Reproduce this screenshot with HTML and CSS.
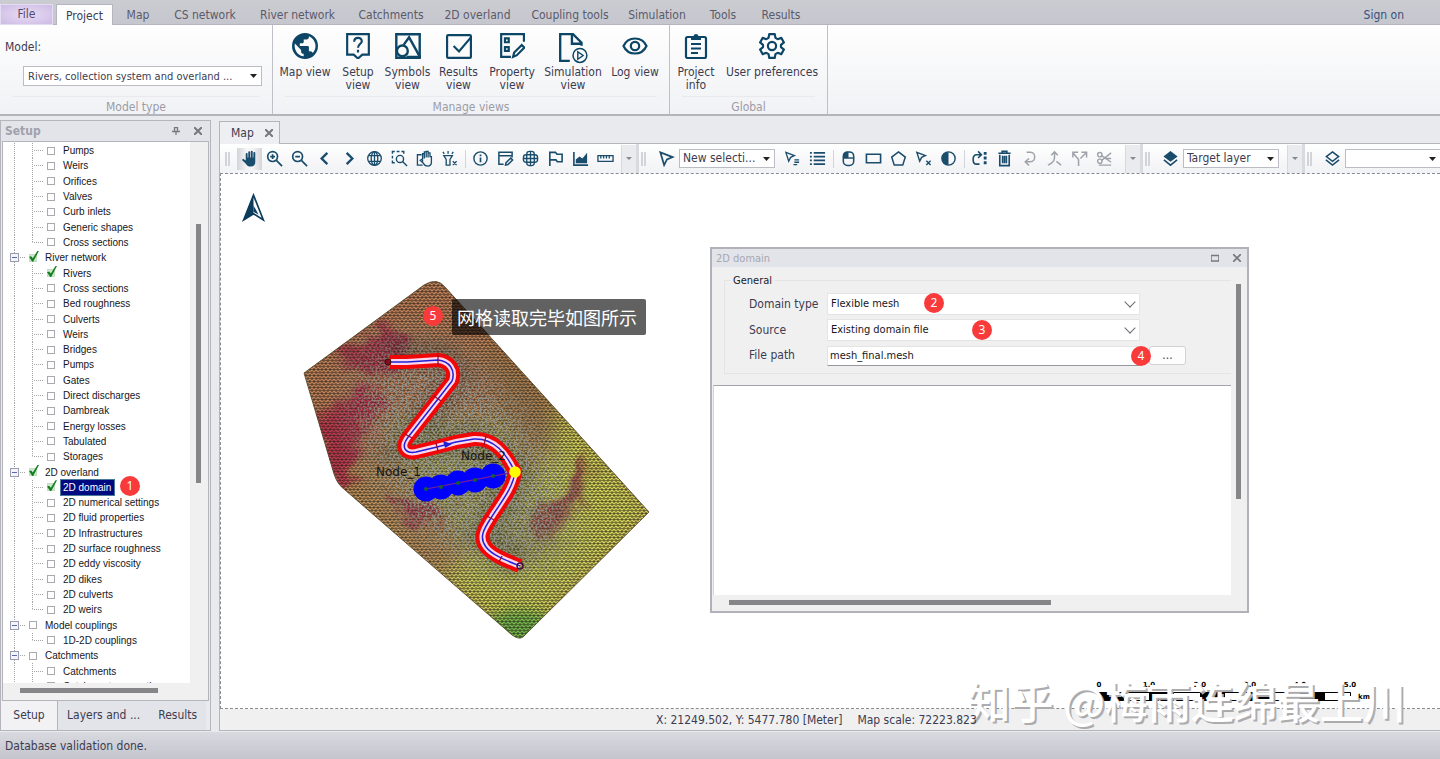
FILE: index.html
```html
<!DOCTYPE html>
<html lang="en">
<head>
<meta charset="utf-8">
<title>2D domain - Map</title>
<link rel="stylesheet" href="styles.css">
</head>
<body>
<svg class="defs" aria-hidden="true">
  <symbol id="i-globe" viewBox="0 0 24 24"><path fill="currentColor" fill-rule="evenodd" d="M12 0a12 12 0 1 0 0 24a12 12 0 1 0 0-24zM15.600 2.900v.6a2.400 2.400 0 0 1-2.400 2.400h-2.400v2.400a1.200 1.200 0 0 1-1.200 1.200H7.200V12h7.200a1.200 1.200 0 0 1 1.200 1.200v3.600h1.200c1.100 0 2 .7 2.300 1.700A9.600 9.600 0 0 0 15.600 3zM2.700 9.800a9.600 9.600 0 0 0 8.100 11.700v-2.300a2.400 2.400 0 0 1-2.400-2.400v-1.200z"/></symbol>
  <symbol id="i-setup" viewBox="0 0 24 24"><g fill="none" stroke="currentColor" stroke-width="2"><path d="M2 1h20v19h-6l-4 3.500L8 20H2z"/><path d="M8.500 8c0-4.500 7-4.500 7-.5 0 2.500-3.500 3-3.500 6M12 15.500V18"/></g></symbol>
  <symbol id="i-symbols" viewBox="0 0 24 24"><g fill="none" stroke="currentColor" stroke-width="2.200"><path d="M1.200 1.200h21.600v21.600H1.200z"/><circle cx="6.800" cy="16.500" r="5"/><path d="M8 11l5-7 10 18H11"/></g></symbol>
  <symbol id="i-results" viewBox="0 0 24 24"><g fill="none" stroke="currentColor" stroke-width="2"><rect x="1" y="2" width="22" height="21" rx="1"/><path d="M7 12l5 5L23 4"/></g></symbol>
  <symbol id="i-property" viewBox="0 0 24 24"><g fill="none" stroke="currentColor" stroke-width="2"><path d="M11 22H2V1h21v7M5.500 5h3.500v3.500H5.500zM5.500 13h3.500v3.500H5.500zM13 22l1-4 7-7 2.500 2.500-7 7z"/></g></symbol>
  <symbol id="i-simulation" viewBox="0 0 28 30"><g fill="none" stroke="currentColor" stroke-width="2.200"><path d="M11 27H2V2h12l8 8v3M13 2v9h9"/><circle cx="20.500" cy="22" r="6.500" stroke-width="1.400"/><path d="M18.500 18.500v7l5-3.500z" stroke-width="1.300"/></g></symbol>
  <symbol id="i-eye" viewBox="0 0 26 18"><g fill="none" stroke="currentColor" stroke-width="2.200"><path d="M1.500 9C6-1 20-1 24.500 9C20 19 6 19 1.500 9z"/><circle cx="13" cy="9" r="4.200"/></g></symbol>
  <symbol id="i-clip" viewBox="0 0 24 26"><g fill="none" stroke="currentColor" stroke-width="2.200"><rect x="2" y="4" width="20" height="21" rx="1.500"/><path d="M7 11h10M7 15.500h10M7 20h7"/></g><path fill="currentColor" d="M7 3h2.500a2.600 2.600 0 0 1 5 0H17v4H7z"/></symbol>
  <symbol id="i-gear" viewBox="0 0 24 24"><g fill="none" stroke="currentColor" stroke-width="2"><path stroke-linejoin="round" d="M9.500 1h5l.7 3.500 2 1.200 3.400-1.200 2.400 4.200-2.700 2.300v2l2.700 2.300-2.400 4.200-3.400-1.200-2 1.200-.7 3.500h-5l-.7-3.500-2-1.200-3.400 1.200L1 15.300 3.700 13v-2L1 8.700l2.400-4.200 3.400 1.200 2-1.200z"/><circle cx="12" cy="12" r="3.800"/></g></symbol>
  <symbol id="t-hand" viewBox="0 0 18 18"><path fill="currentColor" d="M1 10.500l1.200-1.200L5 11V4.200a1 1 0 0 1 2 0V8h.7V2.200a1 1 0 0 1 2 0V8h.7V1.700a1 1 0 0 1 2 0V8h.7V3a1 1 0 0 1 2 0V13c0 3-2 4.500-4.500 4.500-3 0-4.300-1-5.500-3z"/></symbol>
  <symbol id="t-zin" viewBox="0 0 18 18"><g fill="none" stroke="currentColor" stroke-width="1.800"><circle cx="7" cy="7" r="5.200"/><path d="M11 11l6 6M4.500 7h5M7 4.500v5"/></g></symbol>
  <symbol id="t-zout" viewBox="0 0 18 18"><g fill="none" stroke="currentColor" stroke-width="1.800"><circle cx="7" cy="7" r="5.200"/><path d="M11 11l6 6M4.500 7h5"/></g></symbol>
  <symbol id="t-prev" viewBox="0 0 18 18"><path fill="none" stroke="currentColor" stroke-width="2.500" d="M12 3L6 9l6 6"/></symbol>
  <symbol id="t-next" viewBox="0 0 18 18"><path fill="none" stroke="currentColor" stroke-width="2.500" d="M6 3l6 6-6 6"/></symbol>
  <symbol id="t-world" viewBox="0 0 18 18"><g fill="none" stroke="currentColor" stroke-width="1.400"><circle cx="9" cy="9" r="7.200"/><ellipse cx="9" cy="9" rx="3.500" ry="7.200"/><path d="M9 2v14M3 6h12M3 12h12"/></g></symbol>
  <symbol id="t-zsel" viewBox="0 0 18 18"><g fill="none" stroke="currentColor" stroke-width="1.500"><path d="M1.500 4V1.500H4M6 1.500h3M11 1.500h2.500V4M1.500 6v3M1.500 11v2.500H4"/><circle cx="9.500" cy="9.500" r="3.800"/><path d="M12 12l5 5"/></g></symbol>
  <symbol id="t-pansel" viewBox="0 0 18 18"><path fill="none" stroke="currentColor" stroke-width="1.400" d="M6 5H1.500v11H7M7 10V4h1.800v5V2h2v6V1.500h2V8V3h2v4h1.500v6c0 3-2 4-4 4s-3.500-1-4.500-3L4.500 11l1.500-1 1.500 2"/></symbol>
  <symbol id="t-flash" viewBox="0 0 18 18"><path fill="none" stroke="currentColor" stroke-width="1.400" d="M3 6h9l-2.500 4v6h-4v-6zM7.500 1v3M2 2l1.500 2M13 2l-1.500 2M12.500 12l4 4M16.500 12l-4 4"/></symbol>
  <symbol id="t-info" viewBox="0 0 18 18"><g fill="none" stroke="currentColor" stroke-width="1.500"><circle cx="9" cy="9" r="7"/><path d="M9 8v5M9 4.800v1.800" stroke-width="1.800"/></g></symbol>
  <symbol id="t-edit" viewBox="0 0 18 18"><path fill="none" stroke="currentColor" stroke-width="1.600" d="M7 15H2V2.500h14V8M2 6h14M9 16l.6-2.600L14.500 8.500l2 2L11.600 15.400z"/></symbol>
  <symbol id="t-center" viewBox="0 0 18 18"><g fill="none" stroke="currentColor" stroke-width="1.400"><rect x="5" y="1.500" width="8" height="15" rx="3"/><rect x="1.500" y="5" width="15" height="8" rx="3"/><path d="M9 1v16M1 9h16"/></g></symbol>
  <symbol id="t-flag" viewBox="0 0 18 18"><path fill="none" stroke="currentColor" stroke-width="1.700" d="M3 17V2.500h6l1.500 2H16v8h-5l-1.500-2H3"/></symbol>
  <symbol id="t-chart" viewBox="0 0 18 18"><path fill="none" stroke="currentColor" stroke-width="1.700" d="M2 2v14h15"/><path fill="currentColor" d="M4 14V10l4-3 3 2 5-6v11z"/></symbol>
  <symbol id="t-ruler" viewBox="0 0 18 18"><path fill="none" stroke="currentColor" stroke-width="1.400" d="M1 6h16v6H1zM4 6v3M7 6v3M10 6v3M13 6v3"/></symbol>
  <symbol id="t-arrow" viewBox="0 0 18 18"><path fill="none" stroke="currentColor" stroke-width="1.800" d="M2.500 2.500l13 5-6 2.500-3 6z"/></symbol>
  <symbol id="t-arrlist" viewBox="0 0 18 18"><path fill="none" stroke="currentColor" stroke-width="1.400" d="M2 2.500l9 3.500-4 1.800-2 4zM11 10.500h5M11 13h5M10 15.500h4"/></symbol>
  <symbol id="t-list" viewBox="0 0 18 18"><path fill="none" stroke="currentColor" stroke-width="1.900" d="M1 3h2M5 3h12M1 7h2M5 7h12M1 11h2M5 11h12M1 15h2M5 15h12"/></symbol>
  <symbol id="t-mouse" viewBox="0 0 18 18"><rect x="3.500" y="2" width="11" height="14.500" rx="4.500" fill="none" stroke="currentColor" stroke-width="1.600"/><path fill="currentColor" d="M4 8.500V6a4 4 0 0 1 5-4v6.500z"/><path stroke="currentColor" stroke-width="1.500" d="M3.500 8.500h11"/></symbol>
  <symbol id="t-rect" viewBox="0 0 18 18"><path fill="none" stroke="currentColor" stroke-width="1.700" d="M1.500 4.500h15v9h-15z"/></symbol>
  <symbol id="t-poly" viewBox="0 0 18 18"><path fill="none" stroke="currentColor" stroke-width="1.600" d="M9 2l7.200 5.500L13.500 16h-9L1.800 7.500z"/></symbol>
  <symbol id="t-arrx" viewBox="0 0 18 18"><path fill="none" stroke="currentColor" stroke-width="1.500" d="M2 2.500l9 3.500-4 1.800-2 4zM12 11.500l4.500 4.500M16.500 11.500L12 16"/></symbol>
  <symbol id="t-half" viewBox="0 0 18 18"><circle cx="9" cy="9" r="7" fill="none" stroke="currentColor" stroke-width="1.500"/><path fill="currentColor" d="M9 2a7 7 0 0 0 0 14z"/></symbol>
  <symbol id="t-move" viewBox="0 0 18 18"><g fill="none" stroke="currentColor" stroke-width="1.700"><path d="M9 15H6C1 15 1 5 6 5H10M7.500 1.500L11 5 7.500 8.500"/><path d="M15 2v15" stroke-width="3" stroke-dasharray="3 2"/></g></symbol>
  <symbol id="t-trash" viewBox="0 0 18 18"><g fill="none" stroke="currentColor" stroke-width="1.700"><path d="M2.500 3.500h13M6.500 3V1.500h5V3M4 5v11.500h10V5M7 6v8M9 6v8M11 6v8"/></g></symbol>
  <symbol id="t-undo" viewBox="0 0 18 18"><path fill="none" stroke="currentColor" stroke-width="1.600" d="M6 2.500h4c6 0 6 10 0 10H5M8.500 9l-4 3.500 4 4"/></symbol>
  <symbol id="t-merge" viewBox="0 0 18 18"><path fill="none" stroke="currentColor" stroke-width="1.600" d="M2 16c5-2 7-4 7-8V2M5.500 5.500L9 2l3.500 3.500M16 16l-5-4"/></symbol>
  <symbol id="t-split" viewBox="0 0 18 18"><path fill="none" stroke="currentColor" stroke-width="1.600" d="M8 17v-7L2 3M2 8V2.500h5.500M10 9l6-6M11 2.500h5.500V8"/></symbol>
  <symbol id="t-cut" viewBox="0 0 18 18"><g fill="none" stroke="currentColor" stroke-width="1.500"><circle cx="4" cy="5" r="2.300"/><circle cx="4" cy="12" r="2.300"/><path d="M6 6l10 7M6 11l10-8M3 16h13M11 9h5"/></g></symbol>
  <symbol id="t-layf" viewBox="0 0 18 18"><path fill="currentColor" d="M9 1l7.500 6L9 12.500 1.500 7z"/><path fill="none" stroke="currentColor" stroke-width="1.700" d="M2 10.500l7 5.500 7-5.500"/></symbol>
  <symbol id="t-lay" viewBox="0 0 18 18"><path fill="none" stroke="currentColor" stroke-width="1.600" d="M9 2l6.500 5L9 12 2.500 7zM2 10.500l7 5.500 7-5.500"/></symbol>
</svg>

<nav class="tabs">
  <button class="tab file">File</button>
  <button class="tab active">Project</button>
  <button class="tab">Map</button>
  <button class="tab">CS network</button>
  <button class="tab">River network</button>
  <button class="tab">Catchments</button>
  <button class="tab">2D overland</button>
  <button class="tab">Coupling tools</button>
  <button class="tab">Simulation</button>
  <button class="tab">Tools</button>
  <button class="tab">Results</button>
  <a class="signon" href="#">Sign on</a>
</nav>

<header class="ribbon">
  <section class="group model">
    <div class="model-body">
      <label for="model">Model:</label>
      <span class="combo"><select id="model"><option>Rivers, collection system and overland ...</option></select></span>
    </div>
    <h2 class="group-name">Model type</h2>
  </section>
  <section class="group views">
    <div class="tools">
      <button class="big"><svg><use href="#i-globe"/></svg>Map view</button>
      <button class="big"><svg><use href="#i-setup"/></svg>Setup<br>view</button>
      <button class="big"><svg><use href="#i-symbols"/></svg>Symbols<br>view</button>
      <button class="big"><svg><use href="#i-results"/></svg>Results<br>view</button>
      <button class="big"><svg><use href="#i-property"/></svg>Property<br>view</button>
      <button class="big"><svg class="tall"><use href="#i-simulation"/></svg>Simulation<br>view</button>
      <button class="big"><svg><use href="#i-eye"/></svg>Log view</button>
    </div>
    <h2 class="group-name">Manage views</h2>
  </section>
  <section class="group global">
    <div class="tools">
      <button class="big"><svg><use href="#i-clip"/></svg>Project<br>info</button>
      <button class="big"><svg><use href="#i-gear"/></svg>User preferences</button>
    </div>
    <h2 class="group-name">Global</h2>
  </section>
</header>

<main class="work">
  <aside class="panel">
    <div class="panel-head">
      <h2>Setup</h2>
      <button class="mini" aria-label="Pin"><svg viewBox="0 0 8 8"><path d="M2.500 0v4M5.500 0v4M2 .5h4M0 4.500h8M4 4v4" fill="none" stroke="currentColor" stroke-width="1.300"/></svg></button>
      <button class="mini" aria-label="Close"><svg viewBox="0 0 8 8"><path d="M0 0l8 8M8 0L0 8" stroke="currentColor" stroke-width="2"/></svg></button>
    </div>
    <div class="tree-box">
      <div class="tree-view">
        <ul class="tree">
          <li><label><input type="checkbox">Pumps</label></li>
          <li><label><input type="checkbox">Weirs</label></li>
          <li><label><input type="checkbox">Orifices</label></li>
          <li><label><input type="checkbox">Valves</label></li>
          <li><label><input type="checkbox">Curb inlets</label></li>
          <li><label><input type="checkbox">Generic shapes</label></li>
          <li class="last"><label><input type="checkbox">Cross sections</label></li>
          <li class="root"><button class="fold" aria-label="Collapse"></button><label><input type="checkbox" checked>River network</label></li>
          <li><label><input type="checkbox" checked>Rivers</label></li>
          <li><label><input type="checkbox">Cross sections</label></li>
          <li><label><input type="checkbox">Bed roughness</label></li>
          <li><label><input type="checkbox">Culverts</label></li>
          <li><label><input type="checkbox">Weirs</label></li>
          <li><label><input type="checkbox">Bridges</label></li>
          <li><label><input type="checkbox">Pumps</label></li>
          <li><label><input type="checkbox">Gates</label></li>
          <li><label><input type="checkbox">Direct discharges</label></li>
          <li><label><input type="checkbox">Dambreak</label></li>
          <li><label><input type="checkbox">Energy losses</label></li>
          <li><label><input type="checkbox">Tabulated</label></li>
          <li class="last"><label><input type="checkbox">Storages</label></li>
          <li class="root"><button class="fold" aria-label="Collapse"></button><label><input type="checkbox" checked>2D overland</label></li>
          <li><label><input type="checkbox" checked><span class="picked">2D domain</span></label><b class="badge b1">1</b></li>
          <li><label><input type="checkbox">2D numerical settings</label></li>
          <li><label><input type="checkbox">2D fluid properties</label></li>
          <li><label><input type="checkbox">2D Infrastructures</label></li>
          <li><label><input type="checkbox">2D surface roughness</label></li>
          <li><label><input type="checkbox">2D eddy viscosity</label></li>
          <li><label><input type="checkbox">2D dikes</label></li>
          <li><label><input type="checkbox">2D culverts</label></li>
          <li class="last"><label><input type="checkbox">2D weirs</label></li>
          <li class="root"><button class="fold" aria-label="Collapse"></button><label><input type="checkbox">Model couplings</label></li>
          <li class="last"><label><input type="checkbox">1D-2D couplings</label></li>
          <li class="root"><button class="fold" aria-label="Collapse"></button><label><input type="checkbox">Catchments</label></li>
          <li><label><input type="checkbox">Catchments</label></li>
          <li><label><input type="checkbox">Catchment connections</label></li>
        </ul>
      </div>
      <div class="vbar"><i></i></div>
      <div class="hbar"><i></i></div>
    </div>
    <div class="panel-tabs">
      <button class="on">Setup</button><button>Layers and ...</button><button>Results</button>
    </div>
  </aside>

  <section class="doc">
    <div class="doc-tabs"><div class="doc-tab">Map <button class="mini" aria-label="Close map"><svg viewBox="0 0 8 8"><path d="M0 0l8 8M8 0L0 8" stroke="currentColor" stroke-width="2"/></svg></button></div></div>
    <div class="bars">
      <div class="bar">
        <i class="grip"></i>
        <button class="t on" aria-label="Pan"><svg><use href="#t-hand"/></svg></button>
        <button class="t" aria-label="Zoom in"><svg><use href="#t-zin"/></svg></button>
        <button class="t" aria-label="Zoom out"><svg><use href="#t-zout"/></svg></button>
        <button class="t" aria-label="Previous"><svg><use href="#t-prev"/></svg></button>
        <button class="t" aria-label="Next"><svg><use href="#t-next"/></svg></button>
        <button class="t" aria-label="Full extent"><svg><use href="#t-world"/></svg></button>
        <button class="t" aria-label="Zoom to selection"><svg><use href="#t-zsel"/></svg></button>
        <button class="t" aria-label="Pan to selection"><svg><use href="#t-pansel"/></svg></button>
        <button class="t" aria-label="Clear flash"><svg><use href="#t-flash"/></svg></button>
        <i class="sep"></i>
        <button class="t" aria-label="Identify"><svg><use href="#t-info"/></svg></button>
        <button class="t" aria-label="Edit"><svg><use href="#t-edit"/></svg></button>
        <button class="t" aria-label="Center"><svg><use href="#t-center"/></svg></button>
        <button class="t" aria-label="Flag"><svg><use href="#t-flag"/></svg></button>
        <button class="t" aria-label="Profile"><svg><use href="#t-chart"/></svg></button>
        <button class="t" aria-label="Measure"><svg><use href="#t-ruler"/></svg></button>
        <button class="more" aria-label="More"></button>
      </div>
      <div class="bar">
        <i class="grip"></i>
        <button class="t" aria-label="Select"><svg><use href="#t-arrow"/></svg></button>
        <span class="combo small"><select aria-label="Selection mode"><option>New selecti...</option></select></span>
        <i class="gap"></i>
        <button class="t" aria-label="Select by list"><svg><use href="#t-arrlist"/></svg></button>
        <button class="t" aria-label="List"><svg><use href="#t-list"/></svg></button>
        <i class="sep"></i>
        <button class="t" aria-label="Mouse"><svg><use href="#t-mouse"/></svg></button>
        <button class="t" aria-label="Rectangle"><svg><use href="#t-rect"/></svg></button>
        <button class="t" aria-label="Polygon"><svg><use href="#t-poly"/></svg></button>
        <button class="t" aria-label="Clear selection"><svg><use href="#t-arrx"/></svg></button>
        <button class="t" aria-label="Invert"><svg><use href="#t-half"/></svg></button>
        <i class="sep"></i>
        <button class="t" aria-label="Move"><svg><use href="#t-move"/></svg></button>
        <button class="t" aria-label="Delete"><svg><use href="#t-trash"/></svg></button>
        <button class="t off" aria-label="Undo"><svg><use href="#t-undo"/></svg></button>
        <button class="t off" aria-label="Merge"><svg><use href="#t-merge"/></svg></button>
        <button class="t off" aria-label="Split"><svg><use href="#t-split"/></svg></button>
        <button class="t off" aria-label="Cut"><svg><use href="#t-cut"/></svg></button>
        <i class="gap"></i>
        <button class="more" aria-label="More"></button>
      </div>
      <div class="bar">
        <i class="grip"></i>
        <button class="t" aria-label="Target"><svg><use href="#t-layf"/></svg></button>
        <span class="combo small"><select aria-label="Target layer"><option>Target layer</option></select></span>
        <i class="gap"></i>
        <button class="more" aria-label="More"></button>
      </div>
      <div class="bar">
        <i class="grip"></i>
        <button class="t" aria-label="Layers"><svg><use href="#t-lay"/></svg></button>
        <span class="combo small"><select aria-label="Layer"><option></option></select></span>
      </div>
    </div>

    <div class="map">
      <svg class="north" viewBox="0 0 24 28"><path d="M12 2l9.500 24L12 20 2.500 26z" fill="none" stroke="#0c3c5c" stroke-width="1.600"/><path d="M12 2v18l-9.500 6z" fill="#0c3c5c"/><path d="M12 12l5 9-5-3z" fill="#0c3c5c"/></svg>

      <svg class="mesh" viewBox="300 276 354 368" role="img" aria-label="Flexible mesh">
        <defs>
          <clipPath id="area"><path d="M304 373L424 285Q437 277 445 287L649 512L523 637Q519 640 512 635L345 490Q337 484 334 474Z"/></clipPath>
          <filter id="soft" x="-30%" y="-30%" width="160%" height="160%"><feGaussianBlur stdDeviation="11"/></filter>
          <filter id="soft2" x="-30%" y="-30%" width="160%" height="160%"><feGaussianBlur stdDeviation="6"/></filter>
          <filter id="rough" x="-30%" y="-30%" width="160%" height="160%"><feGaussianBlur stdDeviation="5" result="b"/><feTurbulence type="fractalNoise" baseFrequency=".04" numOctaves="3" seed="8"/><feDisplacementMap in="b" scale="40" xChannelSelector="R" yChannelSelector="G"/></filter>
          <filter id="grain" x="0" y="0" width="100%" height="100%"><feTurbulence type="fractalNoise" baseFrequency=".5" numOctaves="2" seed="3"/><feColorMatrix values="0 0 0 0 .27  0 0 0 0 .28  0 0 0 0 .25  5 0 0 0 -2.200"/></filter>
          <pattern id="tri" width="4" height="6" patternUnits="userSpaceOnUse"><path d="M0 .5H4M0 3.500H4M0 .5L2 3.500 4 .5M2 3.500L0 6.500M2 3.500L4 6.500" fill="none" stroke="#1c1a10" stroke-opacity=".85" stroke-width=".6"/></pattern>
          <pattern id="diag" width="4" height="4" patternUnits="userSpaceOnUse" patternTransform="rotate(42)"><path d="M0 1H4M1 0V4" fill="none" stroke="#1c1a10" stroke-opacity=".6" stroke-width=".8"/></pattern>
          <radialGradient id="core"><stop offset=".55" stop-color="#fff"/><stop offset="1" stop-color="#000"/></radialGradient>
          <mask id="inner" maskUnits="userSpaceOnUse" x="300" y="276" width="354" height="368"><ellipse cx="462" cy="460" rx="175" ry="105" transform="rotate(50 462 460)" fill="url(#core)"/></mask>
        </defs>
        <g clip-path="url(#area)">
          <path d="M300 276h354v368H300z" fill="#e0a868"/>
          <g filter="url(#soft)">
            <path d="M300 260h180l80 110-110 60-150 50z" fill="#e09468"/>
            <path d="M560 400l100 110-135 140-90-70 90-70z" fill="#f6f668"/>
            <path d="M385 420l60 110 60 40 60-20-60-130z" fill="#cec870"/>
            <path d="M480 340l50 20 30 60-10 40-50-40z" fill="#c89058"/>
          </g>
          <g filter="url(#rough)">
            <path d="M335 352l35-24 40 8 -5 30-35 8z" fill="#d43c58"/>
            <path d="M312 412l75-28-35 85-18 30z" fill="#e03c5c"/>
            <path d="M588 456l10 12-45 66-25 4z" fill="#c8605c"/>
            <path d="M385 490l60 22 0 14-42-8z" fill="#d04c60"/>
          </g>
          <g filter="url(#soft2)"><ellipse cx="520" cy="628" rx="34" ry="18" fill="#86d458"/></g>
          <g filter="url(#soft2)" opacity=".3"><path d="M388 355L440 355 458 375 405 445 470 440 515 470 485 535 520 566" fill="none" stroke="#444744" stroke-width="30"/></g>
          <path d="M300 276h354v368H300z" fill="url(#tri)"/>
          <path d="M300 276h354v368H300z" fill="url(#diag)" opacity=".5"/>
          <g mask="url(#inner)"><path d="M300 276h354v368H300z" filter="url(#grain)"/></g>
        </g>
        <path d="M304 373L424 285Q437 277 445 287L649 512L523 637Q519 640 512 635L345 490Q337 484 334 474Z" fill="none" stroke="#4c4630" stroke-width=".8"/>
        <text x="376" y="476" font-family="DejaVu Sans, sans-serif" font-size="12" fill="#161616">Node_1</text>
        <g fill="none" stroke-linejoin="round">
          <path d="M390 362H407L423 361L438 360C449 361 456 370 452 381L438 399L409 436C400 447 405 454 416 452L437 447L456 442L474 439C494 438 506 453 515 472C513 488 501 502 491 518C483 530 479 538 486 547C492 555 505 560 520 566" stroke="#f00808" stroke-width="14"/>
          <path d="M391 362H407L423 361L438 360C449 361 456 370 452 381L438 399L409 436C400 447 405 454 416 452L437 447L456 442L474 439C494 438 506 453 515 472C513 488 501 502 491 518C483 530 479 538 486 547C492 555 505 560 520 566" stroke="#fbd8ee" stroke-width="6"/>
          <path d="M391 362H407L423 361L438 360C449 361 456 370 452 381L438 399L409 436C400 447 405 454 416 452L437 447L456 442L474 439C494 438 506 453 515 472C513 488 501 502 491 518C483 530 479 538 486 547C492 555 505 560 520 566" stroke="#2020d8" stroke-width="1.500"/>
          <path d="M438 355v10M434 396l7 5M405 434l7 4M436 443l2 8M486 436l-2 9M487 516l7 4M502 556l-3 6" stroke="#901030" stroke-width="1.300"/>
          <circle cx="388" cy="362" r="3" fill="#801020" stroke="#301010"/>
          <circle cx="520" cy="566" r="3" stroke="#401040" stroke-width="1.500"/>
        </g>
        <path d="M443 441l9 3-7 4z" fill="#2020d8"/>
        <text x="461" y="460" font-family="DejaVu Sans, sans-serif" font-size="12" fill="#161616">Node_2</text>
        <g fill="#00f"><circle cx="426" cy="489" r="12.500"/><circle cx="441" cy="487" r="12.500"/><circle cx="458" cy="483" r="12.500"/><circle cx="475" cy="480" r="12.500"/><circle cx="493" cy="476" r="12.500"/></g>
        <path d="M426 489L515 472" stroke="#7a2090" stroke-width="1.200"/>
        <g fill="#106030"><circle cx="426" cy="489" r="2"/><circle cx="441" cy="487" r="2"/><circle cx="458" cy="483" r="2"/><circle cx="475" cy="480" r="2"/><circle cx="493" cy="476" r="2"/></g>
        <circle cx="515" cy="472" r="5.800" fill="#ff0"/>
      </svg>
      <b class="badge b5">5</b>
      <p class="note">网格读取完毕如图所示</p>

      <form class="dialog">
        <div class="dialog-head"><h2>2D domain</h2>
          <button type="button" class="mini" aria-label="Maximize"><svg viewBox="0 0 8 8"><path d="M0 1.500h8v5.500H0z" fill="none" stroke="currentColor" stroke-width="1.600"/></svg></button>
          <button type="button" class="mini" aria-label="Close dialog"><svg viewBox="0 0 8 8"><path d="M0 0l8 8M8 0L0 8" stroke="currentColor" stroke-width="1.700"/></svg></button>
        </div>
        <div class="dialog-body">
          <div class="dialog-main">
            <fieldset>
              <legend>General</legend>
              <div class="field"><label for="dtype">Domain type</label><span class="pick"><select id="dtype"><option>Flexible mesh</option></select></span><b class="badge b2">2</b></div>
              <div class="field"><label for="src">Source</label><span class="pick"><select id="src"><option>Existing domain file</option></select></span><b class="badge b3">3</b></div>
              <div class="field path"><label for="path">File path</label><input id="path" type="text" value="mesh_final.mesh"><button type="button" class="browse">...</button><b class="badge b4">4</b></div>
            </fieldset>
            <div class="blank"></div>
            <div class="dlg-h"><i></i></div>
          </div>
          <div class="dlg-v"><i></i></div>
        </div>
      </form>

      <svg class="scale" viewBox="0 0 290 26" role="img" aria-label="Scale bar">
        <g fill="#fff" stroke="#000"><path d="M9.500 12.500h251v8h-251z"/></g>
        <path d="M9 12h25v9H9zM59 12h25v9H59zM110 12h25v9h-25zM160 12h25v9h-25zM210 12h25v9h-25z"/>
        <g font-family="DejaVu Sans, sans-serif" font-weight="bold" font-size="7" text-anchor="middle"><text x="9" y="7">0</text><text x="59" y="7">1.0</text><text x="110" y="7">2.0</text><text x="160" y="7">3.0</text><text x="210" y="7">4.0</text><text x="260" y="7">5.0</text><text x="274" y="19">km</text></g>
      </svg>
    </div>
    <div class="coords"><span>X: 21249.502, Y: 5477.780 [Meter]</span><span>Map scale: 72223.823</span></div>
    <p class="credit">知乎 @梅雨连绵最上川</p>
  </section>
</main>
<footer class="status">Database validation done.</footer>
</body>
</html>
```
FILE: styles.css
```css
* { box-sizing: border-box; }
html, body { height: 100%; margin: 0; }
body {
  display: flex; flex-direction: column; overflow: hidden;
  font: 12px/13px "DejaVu Sans Condensed", "Noto Sans", sans-serif;
  color: #3c3c50; background: #e9eaee;
}
button, select, input { font: inherit; color: inherit; }
button { border: 0; background: none; padding: 0; }
h2, p, ul { margin: 0; padding: 0; }
h2 { font-size: 12px; font-weight: normal; }
.defs { position: absolute; width: 0; height: 0; }

/* ribbon tabs */
.tabs { display: grid; grid-template-columns: 56px 57px 50px 84px 101px 86px 87px 98px 76px 56px 60px 1fr; flex: none; height: 25px; background: linear-gradient(#cbccd2, #c6c7ce); border-bottom: 1px solid #b4b5bd; padding-top: 4px; }
.tab { height: 21px; padding-top: 2px; color: #5a5a6a; white-space: nowrap; }
.tab.file { margin-right: 3px; padding: 0; background: radial-gradient(#e9dcf4, #cdbbe4); border: 1px solid #e4dcf0; color: #55486e; }
.tab.active { background: #fdfdfe; border: 1px solid #b4b5bd; border-bottom: 0; color: #3c3c50; }
.signon { margin: 5px 36px 0 auto; color: #35507c; text-decoration: none; }

/* ribbon */
.ribbon { display: flex; flex: none; height: 91px; background: linear-gradient(#fefefe, #f1f2f5); border-bottom: 2px solid #b3b4bc; }
.group { display: flex; flex-direction: column; justify-content: space-between; border-right: 1px solid #bfc0c8; }
.group-name { text-align: center; color: #9c9ca8; border-top: 1px solid #eaeaee; margin: 0 12px; padding-top: 3px; line-height: 14px; }
.model { width: 273px; }
.views { width: 397px; }
.global { width: 158px; }
.model-body { padding: 16px 10px 0 5px; }
.combo { display: block; position: relative; height: 20px; }
.combo select { width: 100%; height: 100%; appearance: none; border: 1px solid #bbbcc4; border-radius: 0; background: #fff; padding: 0 20px 0 4px; white-space: nowrap; }
.combo::after { content: ""; position: absolute; right: 5px; top: 8px; width: 7px; height: 4px; background: #222; clip-path: polygon(0 0, 100% 0, 50% 100%); }
.model .combo { margin: 12px 0 0 18px; }
.model select { font-size: 11px; }
.tools { display: grid; padding-top: 7px; }
.views .tools { grid-template-columns: 54px 52px 47px 55px 52px 70px 54px; padding-left: 5px; }
.global .tools { grid-template-columns: 46px 106px; padding-left: 3px; }
.big { display: flex; flex-direction: column; align-items: center; justify-content: flex-start; white-space: nowrap; }
.big svg { width: 26px; height: 26px; margin: 1px 0 7px; color: #0c4566; }
.big svg.tall { height: 32px; width: 30px; margin: 0 0 2px; }

/* workspace */
.work { display: flex; flex: 1; min-height: 0; padding-top: 4px; gap: 8px; }
.panel { display: flex; flex-direction: column; width: 211px; border: 1px solid #b3b4bc; background: #e9eaee; }
.panel-head { display: flex; flex: none; align-items: center; height: 20px; padding: 0 5px 0 4px; gap: 8px; background: #e3e4e9; }
.panel-head h2 { flex: 1; color: #a0a1ad; font-weight: bold; }
.mini { width: 14px; height: 14px; color: #77787f; display: grid; place-items: center; }
.mini svg { width: 8px; height: 8px; }
.tree-box { display: grid; grid-template: minmax(0, 1fr) 17px / 1fr 18px; flex: 1; min-height: 0; border: 1px solid #b3b4bc; margin: 0 1px; background: #f0f0f1; }
.tree-view { display: flex; flex-direction: column; overflow: hidden; background: #fff; padding-top: 1px; }
.tree { display: grid; grid-auto-rows: 1fr; flex: 1 0 auto; min-height: calc(100% + 11px); list-style: none; font: 10px/15px "Liberation Sans", sans-serif; color: #16161c; }
.tree li {
  --dots: repeating-linear-gradient(#a4a4a4 0 1px, #fff 1px 2px);
  display: flex; align-items: center; position: relative; padding-left: 43px; white-space: nowrap;
  background: var(--dots) 11px 0 / 1px 100% no-repeat, var(--dots) 29px 0 / 1px 100% no-repeat, repeating-linear-gradient(90deg, #a4a4a4 0 1px, #fff 1px 2px) 29px 50% / 11px 1px no-repeat;
}
.tree li.last { background-size: 1px 100%, 1px 50%, 11px 1px; }
.tree li.root { padding-left: 6px; background: var(--dots) 11px 0 / 1px 100% no-repeat, repeating-linear-gradient(90deg, #a4a4a4 0 1px, #fff 1px 2px) 11px 50% / 11px 1px no-repeat; }
.tree label { display: flex; align-items: center; }
.tree input { appearance: none; flex: none; width: 8px; height: 8px; margin: 0 8px 0 1px; border: 1px solid #a9a9b0; background: #fff; position: relative; }
.tree input:checked { background: #cfe8cf; border-color: #c4dcc4; }
.tree input:checked::after { content: ""; position: absolute; left: -1px; top: -4px; width: 10px; height: 11px; background: #148020; clip-path: polygon(0 55%, 22% 50%, 38% 68%, 85% 0, 100% 0, 42% 100%, 32% 100%); }
.fold { width: 9px; height: 9px; margin: 0 9px 0 1px; border: 1px solid #9a9bb0; background: linear-gradient(#5a6aa8, #5a6aa8) center / 5px 1px no-repeat #f4f4fa; }
.picked { background: #000a80; color: #fff; margin-left: -2px; padding: 0 3px 0 2px; outline: 1px solid #4a7a9a; }
.badge { position: absolute; z-index: 2; width: 20px; height: 20px; border-radius: 50%; background: #f93a3a; color: #fff; font: 12px/19px "Noto Sans", sans-serif; text-align: center; }
.b1 { left: 117px; top: -4px; }
.vbar { padding: 82px 5px 0 6px; }
.vbar i { display: block; width: 5px; height: 259px; background: #868688; }
.hbar { grid-column: 1 / 3; padding: 5px 0 0 17px; }
.hbar i { display: block; width: 138px; height: 5px; background: #868688; }
.panel-tabs { display: flex; flex: none; height: 29px; }
.panel-tabs button { padding: 0 9px; border-top: 0; background: #e3e4ea; }
.panel-tabs button.on { width: 57px; background: #f2f2f5; border-right: 1px solid #b3b4bc; }

.doc { display: flex; flex-direction: column; flex: 1; min-width: 0; position: relative; border-left: 1px solid #b3b4bc; border-bottom: 1px solid #b3b4bc; margin-top: 1px; }
.doc-tabs { flex: none; display: flex; height: 23px; border-bottom: 1px solid #b3b4bc; }
.doc-tab { display: flex; align-items: center; gap: 8px; padding: 0 3px 0 11px; height: 23px; border: 1px solid #b3b4bc; border-bottom: 0; border-left: 0; background: #eeeff2; }
.bars { flex: none; display: flex; height: 29px; overflow: hidden; background: #d9dae0; gap: 3px; }
.bar { display: flex; flex: none; align-items: center; background: linear-gradient(#fff, #f1f2f5); }
.bar:last-child { flex: 1 0 auto; }
.grip { width: 17px; height: 14px; background: linear-gradient(90deg, #d3d4da 0 2px, transparent 2px 3px, #d3d4da 3px 5px, transparent 5px) 5px 0 / 7px 100% no-repeat; }
.bar:not(:first-child) .grip { width: 15px; background-position-x: 2px; }
.t { display: grid; place-items: center; width: 25px; height: 22px; color: #1a4d6c; }
.t svg { width: 17px; height: 17px; }
.t.on { background: linear-gradient(90deg, #d3d4d9, #f6f6f8 40%, #f6f6f8 60%, #d3d4d9); }
.t.off { color: #9fa2a8; }
.sep { width: 6px; height: 18px; background: linear-gradient(#d3d4da, #d3d4da) 3px 0 / 1px 100% no-repeat; }
.gap { width: 5px; }
.more { width: 15px; height: 28px; margin-left: 3px; border-left: 1px solid #d8d9df; background: #eaebef; display: grid; place-items: center; }
.more::after { content: ""; width: 6px; height: 3px; background: #86878f; clip-path: polygon(0 0, 100% 0, 50% 100%); }
.combo.small { width: 96px; height: 19px; }
.combo.small select { padding: 0 14px 0 3px; }

.map { flex: 1; min-height: 0; position: relative; overflow: hidden; background: #fff; border: 1px dashed #8a8b92; border-right: 0; }
.north { position: absolute; left: 20px; top: 19px; width: 25px; height: 29px; }
.mesh { position: absolute; left: 79px; top: 102px; width: 354px; height: 368px; }
.b5 { left: 202px; top: 132px; }
.note { position: absolute; left: 231px; top: 125px; padding: 0 9px 0 5px; border-radius: 2px; background: rgba(0, 0, 0, .62); color: #fff; font: 18px/36px "Noto Sans CJK SC", sans-serif; white-space: nowrap; }
.scale { position: absolute; right: 60px; bottom: 2px; width: 290px; height: 26px; }
.coords { flex: none; display: flex; gap: 15px; height: 21px; padding: 5px 0 0 436px; background: #f0f0f0; }
.coords span { position: relative; z-index: 1; }
.credit { position: absolute; right: 34px; bottom: 4px; font: 500 43px/52px "Noto Sans CJK SC", sans-serif; color: #fff; text-shadow: 2px 2px 0 #acacae; white-space: nowrap; }

/* floating editor */
.dialog { position: absolute; left: 489px; top: 73px; width: 539px; height: 366px; display: flex; flex-direction: column; border: 2px solid #b0b1b9; background: #f0f0f0; }
.dialog-head { flex: none; display: flex; align-items: center; gap: 8px; height: 18px; padding: 0 3px 0 4px; background: #e3e4e9; }
.dialog-head h2 { flex: 1; color: #a6a7b2; font-size: 11px; }
.dialog-body { flex: 1; display: flex; min-height: 0; }
.dialog-main { flex: 1; display: flex; flex-direction: column; min-width: 0; }
fieldset { margin: 7px 0 0 12px; padding: 4px 0 5px 24px; border: 1px solid #e4e4e4; border-right: 0; min-width: 0; }
legend { margin-left: -18px; padding: 0 2px; color: #20202a; font-size: 11px; }
.field { display: flex; align-items: center; position: relative; height: 26px; }
.field.path { height: 25px; }
.field label { width: 78px; }
.pick { position: relative; width: 313px; height: 22px; }
.pick select, .field input { width: 313px; height: 22px; border: 1px solid #e4e4e4; background: #fff; appearance: none; padding: 0 3px; color: #16161c; border-radius: 0; font: 11px/14px "DejaVu Sans Condensed", "Noto Sans", sans-serif; }
.pick::after { content: ""; position: absolute; right: 6px; top: 5px; width: 7px; height: 7px; border: solid #6c6c74; border-width: 0 1px 1px 0; transform: rotate(45deg); }
.field input { border-bottom-color: #96969c; height: 20px; padding: 0 2px; }
.browse { width: 37px; height: 19px; margin-left: 9px; border: 1px solid #d2d2d4; border-radius: 3px; background: #fdfdfd; }
.b2 { left: 175px; top: 2px; }
.b3 { left: 223px; top: 3px; }
.b4 { left: 382px; top: 3px; }
.blank { flex: 1; margin: 11px 0 0 1px; background: #fff; border-top: 1px solid #a4a4ac; border-left: 1px solid #d4d4d8; }
.dlg-h { flex: none; height: 16px; padding: 5px 0 0 17px; }
.dlg-h i { display: block; width: 322px; height: 5px; background: #868688; }
.dlg-v { width: 16px; padding: 17px 0 0 5px; }
.dlg-v i { display: block; width: 5px; height: 215px; background: #868688; }

.status { flex: none; height: 27px; margin-top: 1px; padding: 8px 5px 0; background: linear-gradient(#d9dae0, #c4c5cd); }
```
